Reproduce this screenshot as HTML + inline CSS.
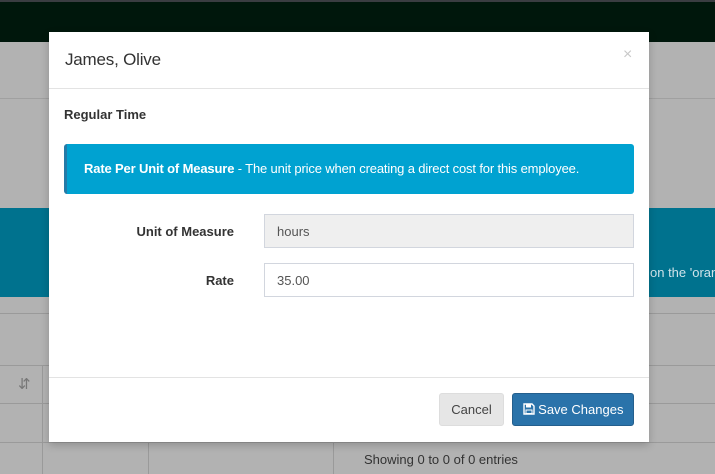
<!DOCTYPE html>
<html><head><style>
*{box-sizing:border-box;margin:0;padding:0}
body{width:715px;height:474px;overflow:hidden;background:#b2b2b2;font-family:"Liberation Sans",sans-serif;position:relative;color:#333}
.abs{position:absolute}
</style></head><body>
<div class="abs" style="left:0;top:0;width:715px;height:2px;background:#3a3d42"></div>
<div class="abs" style="left:0;top:2px;width:715px;height:40px;background:#00170c"></div>
<div class="abs" style="left:0;top:98px;width:715px;height:1px;background:#a0a0a0"></div>
<div class="abs" style="left:0;top:208px;width:715px;height:89px;background:#00728e"></div>
<div class="abs" style="left:650px;top:265px;font-size:13px;color:#cfe3ea;white-space:nowrap">on the 'oran</div>
<div class="abs" style="left:0;top:313px;width:715px;height:1px;background:#9a9a9a"></div>
<div class="abs" style="left:0;top:365px;width:715px;height:1px;background:#9a9a9a"></div>
<div class="abs" style="left:0;top:403px;width:715px;height:1px;background:#9a9a9a"></div>
<div class="abs" style="left:0;top:442px;width:715px;height:1px;background:#9a9a9a"></div>
<div class="abs" style="left:42px;top:365px;width:1px;height:109px;background:#9a9a9a"></div>
<div class="abs" style="left:148px;top:442px;width:1px;height:32px;background:#9a9a9a"></div>
<div class="abs" style="left:333px;top:442px;width:1px;height:32px;background:#9a9a9a"></div>
<div class="abs" style="left:18px;top:375px;font-size:15px;color:#777">⇵</div>
<div class="abs" style="left:364px;top:452px;font-size:13px;color:#333">Showing 0 to 0 of 0 entries</div>

<div class="abs" style="left:49px;top:32px;width:600px;height:410px;background:#fff;box-shadow:0 3px 8px rgba(0,0,0,.2)">
  <div class="abs" style="left:16px;top:18px;font-size:17px;color:#333;letter-spacing:-0.2px">James, Olive</div>
  <div class="abs" style="left:574px;top:14px;font-size:16px;color:#c8c8c8">×</div>
  <div class="abs" style="left:0;top:56px;width:600px;height:1px;background:#e3e3e3"></div>
  <div class="abs" style="left:15px;top:75px;font-size:13px;font-weight:bold;color:#333">Regular Time</div>
  <div class="abs" style="left:15px;top:112px;width:570px;height:50px;background:#00a2d1;border-left:3px solid #247ba8;border-radius:3px;color:#fff;font-size:13px;padding:17px 0 0 17px;white-space:nowrap;letter-spacing:-0.15px"><b>Rate Per Unit of Measure</b> - The unit price when creating a direct cost for this employee.</div>
  <div class="abs" style="left:0;top:192px;width:185px;text-align:right;font-size:13px;font-weight:bold">Unit of Measure</div>
  <div class="abs" style="left:215px;top:182px;width:370px;height:34px;background:#efefef;border:1px solid #d2d6de;font-size:13px;padding:9px 0 0 12px;color:#555">hours</div>
  <div class="abs" style="left:0;top:241px;width:185px;text-align:right;font-size:13px;font-weight:bold">Rate</div>
  <div class="abs" style="left:215px;top:231px;width:370px;height:34px;background:#fff;border:1px solid #d2d6de;font-size:13px;padding:9px 0 0 12px;color:#555">35.00</div>
  <div class="abs" style="left:0;top:345px;width:600px;height:1px;background:#e3e3e3"></div>
  <div class="abs" style="left:390px;top:361px;width:65px;height:33px;background:#e6e6e6;border:1px solid #ddd;border-radius:3px;font-size:13px;text-align:center;line-height:31px;color:#444">Cancel</div>
  <div class="abs" style="left:463px;top:361px;width:122px;height:33px;background:#2a73aa;border:1px solid #245f8d;border-radius:3px;font-size:13px;text-align:center;line-height:31px;color:#fff">
    <svg width="12" height="12" viewBox="0 0 12 12" style="vertical-align:-1px"><path d="M1 1h8l2 2v8H1z" fill="none" stroke="#fff" stroke-width="1.4"/><rect x="3" y="1.5" width="5" height="3" fill="#fff"/><rect x="3" y="7" width="6" height="3.5" fill="none" stroke="#fff"/></svg> Save Changes</div>
</div>
</body></html>
